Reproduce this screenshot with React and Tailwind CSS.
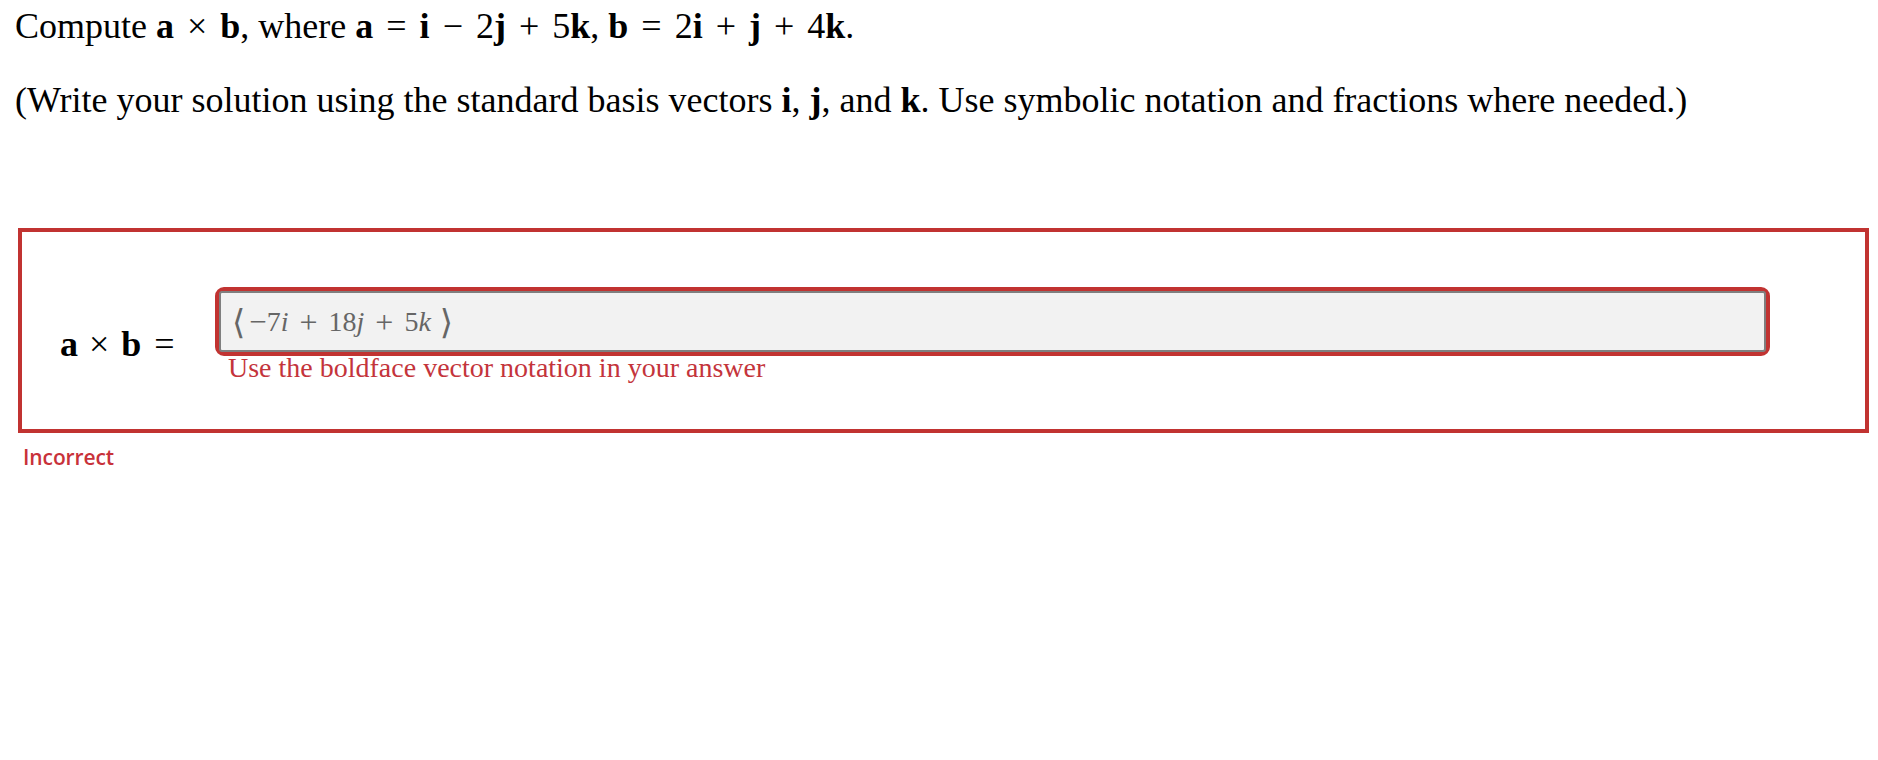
import React from "react";

const serif = { fontFamily: '"Liberation Serif", "Times New Roman", serif' };
const dejavu = { fontFamily: '"DejaVu Serif", serif' };

function B({ children }) {
  return <span className="font-bold">{children}</span>;
}

function Op({ children }) {
  return <span className="mx-[4px]">{children}</span>;
}

export default function App() {
  return (
    <div className="w-[1878px] min-h-[760px] bg-white pl-[15px] pr-[9px] pt-[6px] text-black" style={serif}>
      <div className="text-[36px] leading-[40px] whitespace-nowrap">
        Compute <B>a</B> <Op>×</Op> <B>b</B>, where <B>a</B> <Op>=</Op> <B>i</B> <Op>−</Op> 2<B>j</B> <Op>+</Op> 5<B>k</B>, <B>b</B>{" "}
        <Op>=</Op> 2<B>i</B> <Op>+</Op> <B>j</B> <Op>+</Op> 4<B>k</B>.
      </div>
      <div className="mt-[34px] text-[36px] leading-[40px] whitespace-nowrap">
        (Write your solution using the standard basis vectors <B>i</B>, <B>j</B>, and <B>k</B>. Use symbolic notation and fractions where needed.)
      </div>

      <div className="ml-[3px] mt-[108px] border-[4px] border-[#c13331] pl-[38px] pt-[55px] pb-[51px]">
        <div className="flex items-start">
          <div className="mt-[40px] w-[155px] shrink-0 whitespace-nowrap text-[36px] font-bold leading-[34px]">
            <span>a</span>
            <span className="ml-[11px] font-normal">×</span>
            <span className="ml-[12px]">b</span>
            <span className="ml-[13px] font-normal">=</span>
          </div>
          <div className="flex flex-col">
            <div className="h-[69px] w-[1555px] rounded-[9px] border-[4px] border-[#c13331]">
              <div className="flex h-full items-center whitespace-nowrap rounded-[3px] border-2 border-[#7f7f7f] bg-[#f2f2f2] pl-[11px] text-[28px] leading-none text-[#666666]">
                <span style={dejavu} className="text-[34px] font-light">⟨</span>
                <span className="ml-[4px] text-[31px]">−</span>
                <span>7</span>
                <span className="italic">i</span>
                <span className="mx-[11px] text-[32px]">+</span>
                <span>18</span>
                <span className="italic">j</span>
                <span className="mx-[11px] text-[32px]">+</span>
                <span>5</span>
                <span className="italic">k</span>
                <span style={dejavu} className="ml-[9px] text-[34px] font-light">⟩</span>
              </div>
            </div>
            <div className="mt-[2px] pl-[13px] whitespace-nowrap text-[28px] leading-[20px] text-[#c4343b]">
              Use the boldface vector notation in your answer
            </div>
          </div>
        </div>
      </div>

      <div
        className="mt-[11px] pl-[8px] text-[21px] font-semibold leading-[27px] tracking-[-0.1px] text-[#c8323a]"
        style={{ fontFamily: '"Open Sans", sans-serif' }}
      >
        Incorrect
      </div>
    </div>
  );
}
